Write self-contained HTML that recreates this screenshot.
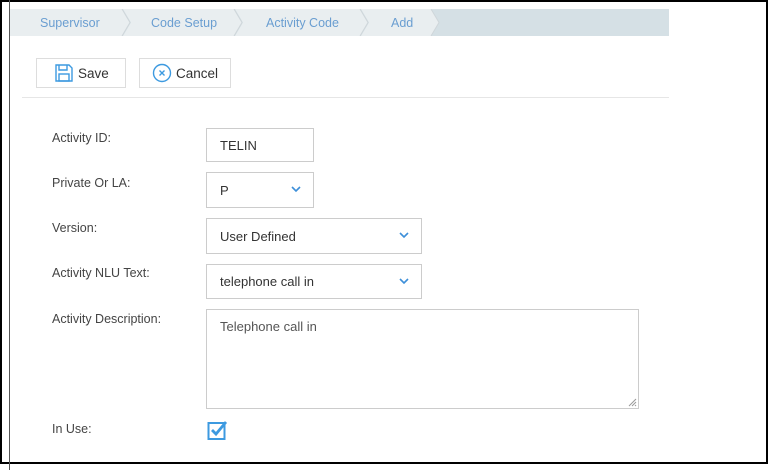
<!DOCTYPE html><html><head><style>
*{box-sizing:border-box;margin:0;padding:0}
body{width:768px;height:464px;background:#fff;font-family:"Liberation Sans",sans-serif;position:relative;overflow:hidden;border:2px solid #000;border-right-width:2px}
.abs{position:absolute}
.bc{left:8px;top:7px;width:659px;height:27px;background:#d5e0e5}
.lbl{font-size:12.5px;color:#444;left:50px}
.in{border:1px solid #ccc;background:#fff;font-size:13px;color:#333;padding-left:13px;display:flex;align-items:center}
.chev{position:absolute;right:12px;top:50%;margin-top:-4px}
.btn{border:1px solid #ddd;height:30px;top:56px;font-size:13.5px;color:#333;display:flex;align-items:center}
</style></head><body>
<div class="abs" style="left:7px;top:-2px;width:1px;height:470px;background:#555"></div>
<div class="abs bc"></div>
<svg class="abs" style="left:8px;top:7px" width="430" height="27">
<polygon points="0,0 112,0 120,13.5 112,27 0,27" fill="#e9eef0"/>
<polygon points="113,0 224,0 232,13.5 224,27 113,27 121,13.5" fill="#e9eef0"/>
<polygon points="225,0 350,0 358,13.5 350,27 225,27 233,13.5" fill="#e9eef0"/>
<polygon points="351,0 421,0 429,13.5 421,27 351,27 359,13.5" fill="#e9eef0"/>
<g stroke="#cfd6da" fill="none"><polyline points="112,0 120,13.5 112,27"/><polyline points="224,0 232,13.5 224,27"/><polyline points="350,0 358,13.5 350,27"/><polyline points="421,0 429,13.5 421,27"/></g>
<g font-family="Liberation Sans" font-size="12.5" fill="#6a9ed1"><text x="30" y="18">Supervisor</text><text x="141" y="18">Code Setup</text><text x="256" y="18">Activity Code</text><text x="381" y="18">Add</text></g>
</svg>
<div class="abs btn" style="left:34px;width:90px"><svg style="margin:0 4px 0 17px" width="20" height="20" viewBox="0 0 20 20" fill="none" stroke="#3d9ae0" stroke-width="1.4"><path d="M2 2h13l3 3v13H2z"/><path d="M5 2v5h8V2"/><rect x="5" y="11" width="10" height="7"/></svg>Save</div>
<div class="abs btn" style="left:137px;width:92px"><svg style="margin:0 4px 0 12px" width="20" height="20" viewBox="0 0 20 20" fill="none" stroke="#3d9ae0" stroke-width="1.4"><circle cx="10" cy="10" r="8.5"/><path d="M7.5 7.5l5 5M12.5 7.5l-5 5"/></svg>Cancel</div>
<div class="abs" style="left:20px;top:95px;width:647px;height:1px;background:#e6e6e6"></div>
<div class="abs lbl" style="top:129px">Activity ID:</div>
<div class="abs lbl" style="top:174px">Private Or LA:</div>
<div class="abs lbl" style="top:219px">Version:</div>
<div class="abs lbl" style="top:264px">Activity NLU Text:</div>
<div class="abs lbl" style="top:310px">Activity Description:</div>
<div class="abs lbl" style="top:420px">In Use:</div>
<div class="abs in" style="left:204px;top:126px;width:108px;height:34px">TELIN</div>
<div class="abs in" style="left:204px;top:170px;width:108px;height:36px">P<svg class="chev" width="10" height="7"><path d="M1 1l4 4 4-4" stroke="#3d8fd9" stroke-width="1.6" fill="none"/></svg></div>
<div class="abs in" style="left:204px;top:216px;width:216px;height:36px">User Defined<svg class="chev" width="10" height="7"><path d="M1 1l4 4 4-4" stroke="#3d8fd9" stroke-width="1.6" fill="none"/></svg></div>
<div class="abs in" style="left:204px;top:262px;width:216px;height:35px">telephone call in<svg class="chev" width="10" height="7"><path d="M1 1l4 4 4-4" stroke="#3d8fd9" stroke-width="1.6" fill="none"/></svg></div>
<div class="abs in" style="left:204px;top:307px;width:433px;height:100px;align-items:flex-start;padding-top:9px;color:#555">Telephone call in
<svg style="position:absolute;right:1px;bottom:1px" width="9" height="9"><path d="M8 1L1 8M8 4L4 8M8 7L7 8" stroke="#999"/></svg></div>
<svg class="abs" style="left:205px;top:417px" width="26" height="22" viewBox="0 0 26 22"><rect x="1.5" y="4" width="16" height="16" fill="none" stroke="#3d9ae0" stroke-width="2"/><path d="M5 11l4 4 10-12" fill="none" stroke="#3d9ae0" stroke-width="2.8"/></svg>
</body></html>
